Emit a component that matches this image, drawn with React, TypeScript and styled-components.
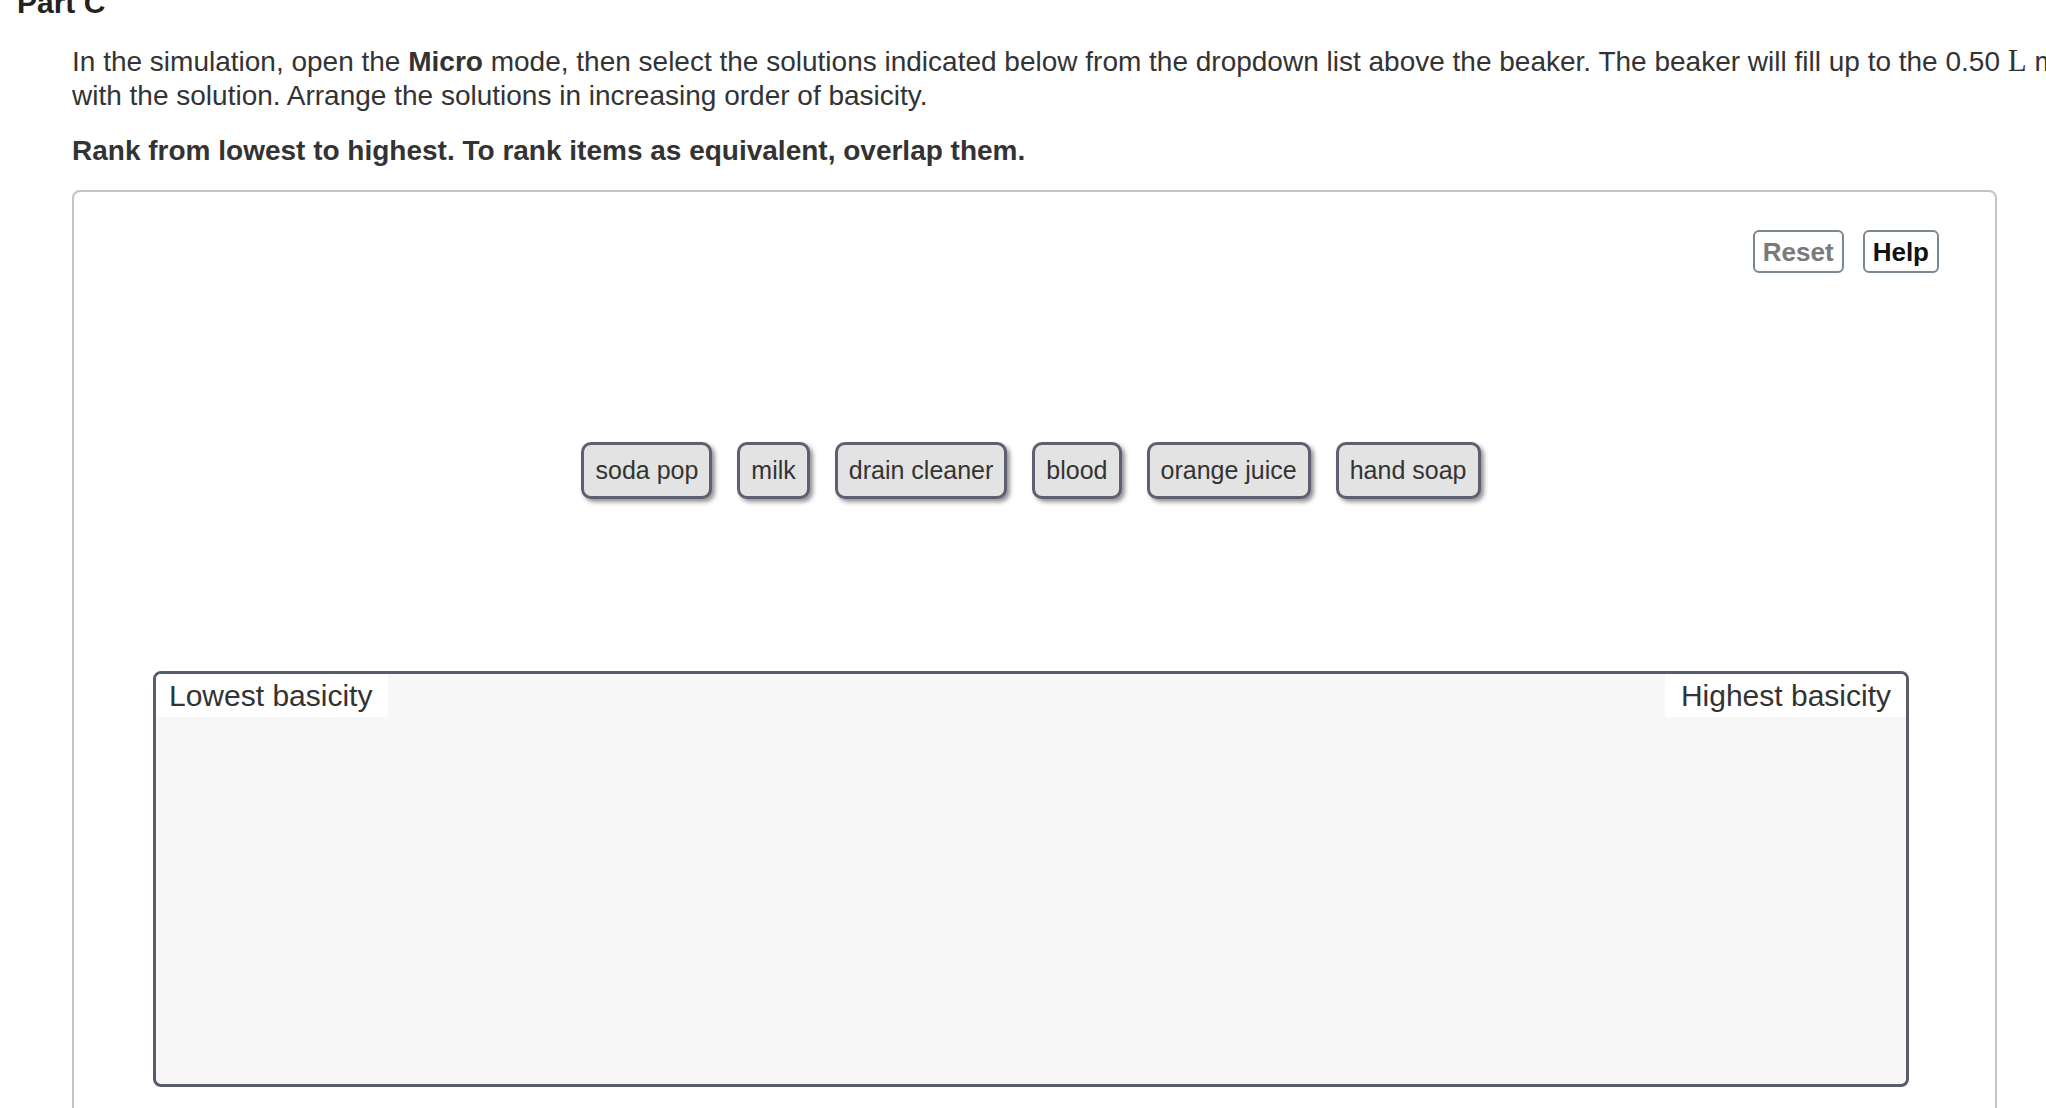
import React from "react";
import styled, { createGlobalStyle } from "styled-components";

const GlobalStyle = createGlobalStyle`
  html, body {
    margin: 0;
    padding: 0;
    background: #ffffff;
    overflow: hidden;
  }
  body {
    font-family: "Liberation Sans", Arial, Helvetica, sans-serif;
    color: #333333;
  }
`;

const Page = styled.div`
  width: 2046px;
  height: 1108px;
  overflow: hidden;
  padding-left: 17px;
  box-sizing: border-box;
`;

const PartTitle = styled.h2`
  margin: -14px 0 0 0;
  font-size: 30px;
  line-height: 34px;
  font-weight: bold;
  color: #222222;
`;

const Body = styled.div`
  padding-left: 55px;
`;

const Prompt = styled.p`
  margin: 24px 0 0 0;
  width: 2050px;
  font-size: 28px;
  line-height: 34px;
  color: #333333;
`;

const Unit = styled.span`
  font-family: "Liberation Serif", "Times New Roman", serif;
  font-size: 31px;
`;

const Instruction = styled.p`
  margin: 21px 0 0 0;
  font-size: 28px;
  line-height: 34px;
  font-weight: bold;
  color: #333333;
`;

const Panel = styled.div`
  margin-top: 22px;
  width: 1925px;
  height: 1000px;
  box-sizing: border-box;
  border: 2px solid #c4c4c4;
  border-radius: 8px;
  padding: 38px 56px 0 79px;
  display: flex;
  flex-direction: column;
`;

const Toolbar = styled.div`
  display: flex;
  justify-content: flex-end;
  gap: 19px;
`;

const ToolButton = styled.button<{ $muted?: boolean }>`
  height: 43px;
  padding: 0 8px;
  box-sizing: border-box;
  background: #ffffff;
  border: 2px solid #7b8891;
  border-radius: 6px;
  font-family: "Liberation Sans", Arial, sans-serif;
  font-size: 26px;
  font-weight: bold;
  line-height: 1;
  color: ${(p) => (p.$muted ? "#7a7a7a" : "#111111")};
  cursor: pointer;
`;

const Pool = styled.div`
  margin-top: 169px;
  margin-right: 30px;
  display: flex;
  justify-content: center;
  gap: 25px;
`;

const Chip = styled.div`
  height: 57px;
  box-sizing: border-box;
  padding: 0 11px;
  display: flex;
  align-items: center;
  background: #e3e3e3;
  border: 3px solid #5d6070;
  border-radius: 10px;
  box-shadow: 3px 3px 4px rgba(40, 40, 50, 0.5);
  font-size: 25px;
  color: #333333;
  white-space: nowrap;
`;

const RankArea = styled.div`
  margin-top: 172px;
  width: 1756px;
  height: 416px;
  box-sizing: border-box;
  background: #f7f7f7;
  border: 3px solid #595c6a;
  border-radius: 8px;
  display: flex;
  justify-content: space-between;
  align-items: flex-start;
`;

const EndLabel = styled.div<{ $side: "left" | "right" }>`
  height: 43px;
  box-sizing: border-box;
  padding: ${(p) => (p.$side === "left" ? "0 16px 0 13px" : "0 15px 0 16px")};
  background: #ffffff;
  font-size: 30px;
  line-height: 43px;
  color: #333333;
  border-radius: ${(p) => (p.$side === "left" ? "5px 0 0 0" : "0 5px 0 0")};
`;

const items = ["soda pop", "milk", "drain cleaner", "blood", "orange juice", "hand soap"];

export default function App() {
  return (
    <>
      <GlobalStyle />
      <Page>
        <PartTitle>Part C</PartTitle>
        <Body>
          <Prompt>
            In the simulation, open the <b>Micro</b> mode, then select the solutions indicated below from the
            dropdown list above the beaker. The beaker will fill up to the 0.50 <Unit>L</Unit> mark with the
            solution. Arrange the solutions in increasing order of basicity.
          </Prompt>
          <Instruction>Rank from lowest to highest. To rank items as equivalent, overlap them.</Instruction>
          <Panel>
            <Toolbar>
              <ToolButton $muted>Reset</ToolButton>
              <ToolButton>Help</ToolButton>
            </Toolbar>
            <Pool>
              {items.map((it) => (
                <Chip key={it}>{it}</Chip>
              ))}
            </Pool>
            <RankArea>
              <EndLabel $side="left">Lowest basicity</EndLabel>
              <EndLabel $side="right">Highest basicity</EndLabel>
            </RankArea>
          </Panel>
        </Body>
      </Page>
    </>
  );
}
